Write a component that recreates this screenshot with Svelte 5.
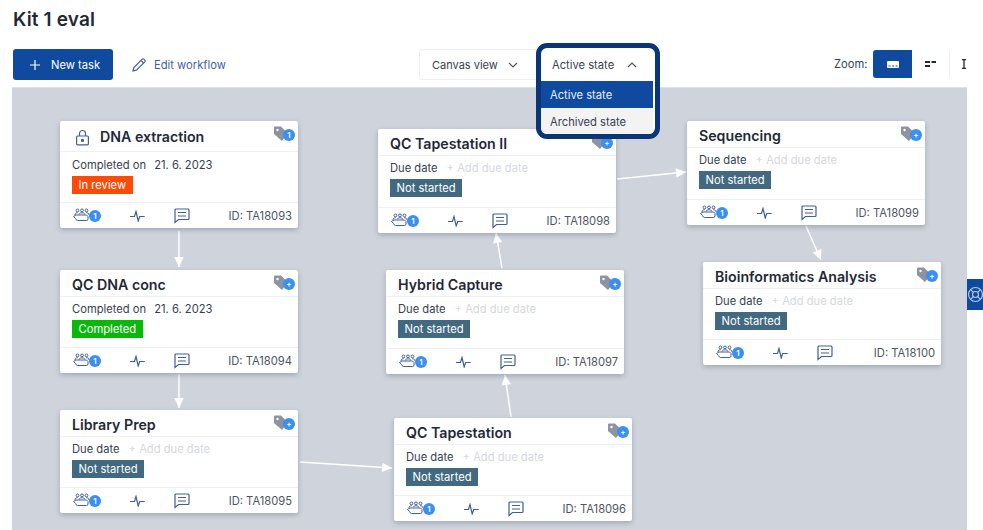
<script>
  const tasks = [
    { id: 'TA18093', title: 'DNA extraction', x: 60, y: 121, h: 107, locked: true, done: '21. 6. 2023', status: 'In review', cls: 'review', tags: '1' },
    { id: 'TA18094', title: 'QC DNA conc', x: 60, y: 270, h: 103, done: '21. 6. 2023', status: 'Completed', cls: 'completed', tags: '+' },
    { id: 'TA18095', title: 'Library Prep', x: 60, y: 410, h: 103, status: 'Not started', cls: 'idle', tags: '+' },
    { id: 'TA18096', title: 'QC Tapestation', x: 394, y: 418, h: 103, status: 'Not started', cls: 'idle', tags: '+' },
    { id: 'TA18097', title: 'Hybrid Capture', x: 386, y: 270, h: 104, status: 'Not started', cls: 'idle', tags: '+' },
    { id: 'TA18098', title: 'QC Tapestation II', x: 378, y: 129, h: 104, status: 'Not started', cls: 'idle', tags: '+' },
    { id: 'TA18099', title: 'Sequencing', x: 687, y: 121, h: 104, status: 'Not started', cls: 'idle', tags: '+' },
    { id: 'TA18100', title: 'Bioinformatics Analysis', x: 703, y: 262, h: 103, status: 'Not started', cls: 'idle', tags: '+' }
  ]

  // canvas coordinates, relative to the grey area
  const links = [
    [167, 144, 167, 180],
    [167, 287, 167, 321],
    [288, 375, 380, 381],
    [499, 330, 493, 288],
    [490, 181, 484, 146],
    [605, 92, 674, 85],
    [794, 139, 809, 173]
  ]

  function head(l) {
    const [x1, y1, x2, y2] = l
    const a = Math.atan2(y2 - y1, x2 - x1)
    const pt = (r, t) => `${x2 + r * Math.cos(a + t)},${y2 + r * Math.sin(a + t)}`
    return `${x2},${y2} ${pt(11, 2.7)} ${pt(11, -2.7)}`
  }
</script>

<div class="page">
  <h1>Kit 1 eval</h1>

  <div class="toolbar">
    <div class="left">
      <button class="primary">
        <svg width="14" height="14" viewBox="0 0 14 14"><path d="M7 2v10M2 7h10" stroke="#fff" stroke-width="1.2" fill="none" /></svg>
        New task
      </button>
      <button class="link">
        <svg width="16" height="16" viewBox="0 0 16 16" fill="none" stroke="#3f62a5" stroke-width="1.2"><path d="M2 14l.8-3.4L11.2 2.2a1.2 1.2 0 0 1 1.700 0l.9.9a1.2 1.2 0 0 1 0 1.700L5.400 13.200z" /><path d="M10 3.400l2.600 2.600" /></svg>
        Edit workflow
      </button>
    </div>

    <div class="selects">
      <div class="select">
        Canvas view
        <svg width="10" height="6" viewBox="0 0 10 6"><path d="M1 1l4 4 4-4" fill="none" stroke="#4b5563" stroke-width="1.1" /></svg>
      </div>
      <div class="dropdown">
        <div class="current">
          Active state
          <svg width="10" height="6" viewBox="0 0 10 6"><path d="M1 5l4-4 4 4" fill="none" stroke="#4b5563" stroke-width="1.1" /></svg>
        </div>
        <div class="option active">Active state</div>
        <div class="option">Archived state</div>
      </div>
    </div>

    <div class="zoom">
      <span>Zoom:</span>
      <div class="zoom-group">
        <button class="zoom-btn on">
          <svg width="12" height="7" viewBox="0 0 12 7"><rect width="12" height="7" rx="1" fill="#fff" /><path d="M1.500 5h2M5 5h2M8.500 5h2" stroke="#0f4a9f" stroke-width="1" /></svg>
        </button>
        <button class="zoom-btn">
          <svg width="11" height="6" viewBox="0 0 11 6" fill="#1f2937"><rect y="0" width="5" height="2" /><rect x="6.500" y="0" width="4.500" height="2" /><rect y="4" width="5" height="2" /></svg>
        </button>
        <button class="zoom-btn cut">
          <svg width="4" height="10" viewBox="0 0 4 10" fill="none" stroke="#1f2937" stroke-width="1.3"><path d="M2 0v10M0 .7h4M0 9.300h4" /></svg>
        </button>
      </div>
    </div>
  </div>

  <div class="canvas">
    <svg class="links" width="955" height="443">
      {#each links as l}
        <line x1={l[0]} y1={l[1]} x2={l[2]} y2={l[3]} stroke="#fff" stroke-width="1.5" />
        <polygon points={head(l)} fill="#fff" />
      {/each}
    </svg>

    {#each tasks as t}
      <article class="card" style="left: {t.x - 12}px; top: {t.y - 87}px; height: {t.h}px">
        <header class:locked={t.locked}>
          {#if t.locked}
            <svg class="lock" width="15" height="17" viewBox="0 0 15 17" fill="none" stroke="#3f5f9e" stroke-width="1.2"><rect x="1.600" y="7" width="11.800" height="8.800" rx="1" /><path d="M4.500 7V4.500a3 3 0 0 1 6 0V7" /><circle cx="7.500" cy="11.400" r="1" fill="#3f5f9e" /></svg>
          {/if}
          <h2>{t.title}</h2>
          <div class="tag">
            <svg width="17" height="16" viewBox="0 0 17 16"><path d="M1 1.500a1 1 0 0 1 1-1h6l7 7-6 7.500-8-7z" fill="#8d93a0" /><circle cx="4.500" cy="4" r="1.200" fill="#fff" /></svg>
            <span>{t.tags}</span>
          </div>
        </header>
        <div class="body">
          <div class="date">
            {#if t.done}
              <span>Completed on</span><span class="value">{t.done}</span>
            {:else}
              <span>Due date</span><span class="add">+ Add due date</span>
            {/if}
          </div>
          <span class="status {t.cls}">{t.status}</span>
        </div>
        <footer>
          <div class="people">
            <svg width="18" height="14" viewBox="0 0 18 14" fill="none" stroke="#3f5f9e" stroke-width="1"><circle cx="4.500" cy="2.400" r="1.400" /><circle cx="9" cy="2.400" r="1.400" /><circle cx="13.500" cy="2.400" r="1.400" /><path d="M2 7c0-1.800 1.200-2.300 2.800-2.300M16 7c0-1.800-1.200-2.300-2.800-2.300M6.200 6.500c0-1.200 1.200-1.700 2.800-1.700s2.800.5 2.800 1.700" /><path d="M.5 8.500L3 7h10.500l1.500 1.500v2.500a1.500 1.500 0 0 1-1.500 1.500H4.500A2.500 2.500 0 0 1 2.500 10.500z" /></svg>
            <b>1</b>
          </div>
          <svg class="pulse" width="15" height="12" viewBox="0 0 15 12" fill="none" stroke="#3f5f9e" stroke-width="1.200"><path d="M0 6.500h4.500l1.500-5 2.200 9.500 1.500-4.500h5" /></svg>
          <svg class="chat" width="16" height="16" viewBox="0 0 16 16" fill="none" stroke="#3f5f9e" stroke-width="1.200"><path d="M2 1h12a1 1 0 0 1 1 1v8.500a1 1 0 0 1-1 1H4.500L1 14.500V2a1 1 0 0 1 1-1zM4 4.500h8M4 8h8" /></svg>
          <span class="id">ID: {t.id}</span>
        </footer>
      </article>
    {/each}
  </div>

  <div class="help">
    <svg width="17" height="17" viewBox="0 0 17 17" fill="none" stroke="#b9cbea" stroke-width="1.100"><circle cx="8.500" cy="8.500" r="7" /><circle cx="8.500" cy="8.500" r="3" /><path d="M3.600 3.600l2.800 2.800M13.400 3.600l-2.800 2.800M3.600 13.400l2.800-2.800M13.400 13.400l-2.800-2.800" /></svg>
  </div>
</div>

<style>
  :global(body) {
    margin: 0;
    background: #fff;
  }

  .page {
    position: relative;
    width: 983px;
    height: 530px;
    overflow: hidden;
    font-family: Inter, "Liberation Sans", sans-serif;
    color: #1f2937;
  }

  h1 {
    margin: 0;
    padding: 9px 0 0 13px;
    height: 40px;
    box-sizing: border-box;
    font-size: 19px;
    line-height: 22px;
    font-weight: 600;
    letter-spacing: 0.15px;
  }

  .toolbar {
    display: grid;
    grid-template-columns: 406px 453px 1fr;
    height: 38px;
    padding-left: 13px;
    width: 954px;
    overflow: visible;
    box-sizing: border-box;
  }

  .left {
    display: flex;
    align-items: flex-start;
    padding-top: 9px;
  }

  button {
    font: inherit;
    border: 0;
  }

  .primary {
    display: flex;
    align-items: center;
    gap: 9px;
    width: 100px;
    height: 31px;
    padding: 0 0 0 15px;
    background: #0f4a9f;
    color: #fff;
    font-size: 11.200px;
    border-radius: 3px;
  }

  .link {
    display: flex;
    align-items: center;
    gap: 7px;
    height: 31px;
    margin-left: 18px;
    padding: 0;
    background: none;
    color: #3f62a5;
    font-size: 11.200px;
  }

  .selects {
    display: flex;
    align-items: flex-start;
    padding-top: 9px;
    position: relative;
    z-index: 5;
  }

  .select {
    display: flex;
    align-items: center;
    gap: 10px;
    box-sizing: border-box;
    width: 118px;
    height: 31px;
    padding-left: 12px;
    border: 1px solid #eceef1;
    border-radius: 3px 0 0 3px;
    font-size: 11px;
    color: #374151;
  }

  .dropdown {
    position: absolute;
    left: 117px;
    top: 3px;
    box-sizing: border-box;
    width: 124px;
    height: 96px;
    border: 5px solid #0a3576;
    border-radius: 11px;
    background: #fff;
    overflow: hidden;
    font-size: 11.200px;
    color: #374151;
  }

  .current {
    display: flex;
    align-items: center;
    gap: 13px;
    height: 33px;
    padding-left: 11px;
  }

  .option {
    height: 26px;
    width: 112px;
    padding-left: 9px;
    box-sizing: border-box;
    line-height: 28px;
    background: #f3f3f4;
  }

  .option.active {
    height: 27px;
    background: #0f4a9f;
    color: #e8eefa;
    line-height: 29px;
  }

  .zoom {
    display: flex;
    align-items: flex-start;
    padding-top: 10px;
    margin-left: -38px;
  }

  .zoom span {
    font-size: 11.200px;
    line-height: 28px;
    color: #374151;
    margin-right: 6px;
  }

  .zoom-group {
    display: flex;
    width: 95px;
    overflow: hidden;
    flex: none;
  }

  .zoom-btn {
    display: flex;
    align-items: center;
    justify-content: center;
    width: 38px;
    height: 28px;
    flex: none;
    padding: 0;
    background: #fff;
    border-right: 1px solid #eceef1;
  }

  .zoom-btn.on {
    width: 39px;
    background: #0f4a9f;
    border-radius: 3px 0 0 3px;
    border-right: 0;
  }

  .zoom-btn.cut {
    width: 18px;
    justify-content: flex-start;
    padding-left: 12px;
    box-sizing: border-box;
    border-right: 0;
  }

  .canvas {
    position: absolute;
    left: 12px;
    top: 87px;
    width: 955px;
    height: 443px;
    background: #ced3dc;
    box-shadow: inset 0 1px 1px #dfe2e7;
  }

  .links {
    position: absolute;
    left: 0;
    top: 0;
  }

  .card {
    position: absolute;
    display: flex;
    flex-direction: column;
    width: 238px;
    background: #fff;
    border-radius: 2px;
    box-shadow: 0 2px 5px rgba(60, 70, 90, 0.3);
  }

  header {
    position: relative;
    display: flex;
    align-items: center;
    flex: none;
    height: 23px;
    padding: 3px 12px 0;
    border-bottom: 1px solid #eef0f3;
  }

  header.locked {
    height: 28px;
    padding-top: 2px;
  }

  .lock {
    margin-right: 10px;
    margin-left: 3px;
  }

  h2 {
    margin: 0;
    font-size: 14.200px;
    line-height: 20px;
    font-weight: 600;
    color: #1f2937;
    white-space: nowrap;
  }

  .tag {
    position: absolute;
    right: 3px;
    top: 5px;
    width: 22px;
    height: 16px;
  }

  .tag svg {
    position: absolute;
    left: 0;
    top: 0;
  }

  .tag span {
    position: absolute;
    right: 0;
    top: 3px;
    width: 12px;
    height: 12px;
    border-radius: 50%;
    background: #3b8ff0;
    color: #fff;
    font-size: 8px;
    font-weight: 600;
    line-height: 12px;
    text-align: center;
  }

  .body {
    flex: 1;
    padding: 3px 12px 0;
    font-size: 11.200px;
  }

  header.locked + .body {
    padding-top: 4px;
  }

  .date {
    display: flex;
    height: 18px;
    line-height: 18px;
    color: #374151;
  }

  .value {
    margin-left: 8px;
  }

  .add {
    margin-left: 9px;
    color: #d5d8de;
  }

  .status {
    display: inline-block;
    height: 18px;
    margin-top: 2px;
    padding: 0 6.500px;
    line-height: 18px;
    color: #fff;
  }

  .review {
    background: #fc4b08;
  }

  .completed {
    background: #0ab80a;
  }

  .idle {
    background: #42697f;
  }

  footer {
    display: flex;
    align-items: center;
    flex: none;
    height: 25px;
    padding: 0 6px 0 13px;
    border-top: 1px solid #eef0f3;
  }

  .people {
    position: relative;
    width: 28px;
    height: 16px;
    margin-right: 29px;
    flex: none;
  }

  .people svg {
    display: block;
  }

  .people b {
    position: absolute;
    right: 0;
    top: 2px;
    width: 12px;
    height: 12px;
    border-radius: 50%;
    background: #3b8ff0;
    color: #fff;
    font-size: 8px;
    font-weight: 600;
    line-height: 12px;
    text-align: center;
  }

  .pulse {
    margin-right: 29px;
  }

  .id {
    margin-left: auto;
    font-size: 11.200px;
    color: #4b5563;
  }

  .help {
    position: absolute;
    left: 967px;
    top: 279px;
    display: flex;
    align-items: center;
    justify-content: center;
    width: 16px;
    height: 31px;
    background: #0f4a9f;
    overflow: hidden;
  }

  .help svg {
    flex: none;
  }
</style>
